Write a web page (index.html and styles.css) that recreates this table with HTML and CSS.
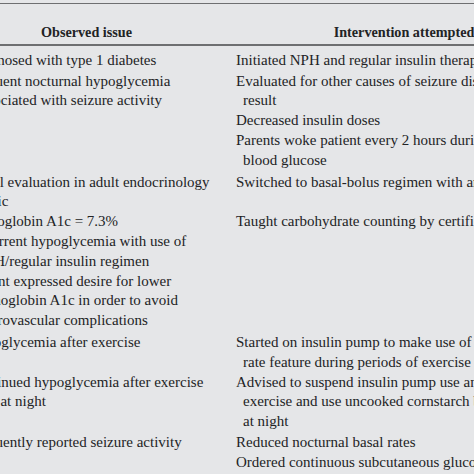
FILE: index.html
```html
<!DOCTYPE html>
<html>
<head>
<meta charset="utf-8">
<link rel="stylesheet" href="styles.css">
</head>
<body>
<div class="page">
<table class="tbl">
  <colgroup>
    <col class="k1">
    <col class="k2">
  </colgroup>
  <thead>
    <tr>
      <th>Observed issue</th>
      <th>Intervention attempted</th>
    </tr>
  </thead>
  <tbody>
    <tr class="r-a">
      <td class="c1"><div class="it">Diagnosed with type 1 diabetes</div></td>
      <td class="c2"><div class="it">Initiated NPH and regular insulin therapy</div></td>
    </tr>
    <tr class="r-b">
      <td class="c1"><div class="it">Frequent nocturnal hypoglycemia<br>associated with seizure activity</div></td>
      <td class="c2">
        <div class="it">Evaluated for other causes of seizure disorder; negative<br>result</div>
        <div class="it">Decreased insulin doses</div>
        <div class="it">Parents woke patient every 2 hours during the night to check<br>blood glucose</div>
      </td>
    </tr>
    <tr class="r-c">
      <td class="c1"><div class="it">Initial evaluation in adult endocrinology<br>clinic</div></td>
      <td class="c2"><div class="it">Switched to basal-bolus regimen with analog insulins</div></td>
    </tr>
    <tr class="r-d">
      <td class="c1">
        <div class="it">Hemoglobin A1c = 7.3%</div>
        <div class="it">Recurrent hypoglycemia with use of<br>NPH/regular insulin regimen</div>
        <div class="it">Patient expressed desire for lower<br>hemoglobin A1c in order to avoid<br>microvascular complications</div>
      </td>
      <td class="c2"><div class="it">Taught carbohydrate counting by certified diabetes educator</div></td>
    </tr>
    <tr class="r-e">
      <td class="c1"><div class="it">Hypoglycemia after exercise</div></td>
      <td class="c2"><div class="it">Started on insulin pump to make use of temporary basal<br>rate feature during periods of exercise</div></td>
    </tr>
    <tr class="r-f">
      <td class="c1"><div class="it">Continued hypoglycemia after exercise<br>and at night</div></td>
      <td class="c2"><div class="it">Advised to suspend insulin pump use and eat snacks during<br>exercise and use uncooked cornstarch before bedtime<br>at night</div></td>
    </tr>
    <tr class="r-g">
      <td class="c1"><div class="it">Frequently reported seizure activity</div></td>
      <td class="c2">
        <div class="it">Reduced nocturnal basal rates</div>
        <div class="it">Ordered continuous subcutaneous glucose monitoring</div>
      </td>
    </tr>
  </tbody>
</table>
</div>
</body>
</html>
```

FILE: styles.css
```css
html, body {
  margin: 0;
  padding: 0;
  background: #e5e6e8;
}
.page {
  width: 474px;
  height: 474px;
  overflow: hidden;
  background: #e5e6e8;
  padding-top: 3px;
  box-sizing: border-box;
}
.tbl {
  border-collapse: collapse;
  table-layout: fixed;
  width: 635px;
  margin-left: -55px;
  font-family: "Liberation Serif", "Times New Roman", serif;
  font-size: 15px;
  line-height: 19.8px;
  color: #222325;
  white-space: nowrap;
}
.k1 { width: 283px; }
.k2 { width: 352px; }
.tbl th {
  font-weight: bold;
  font-size: 14.2px;
  text-align: center;
  border-top: 1px solid #6e6f71;
  border-bottom: 2px solid #6e6f71;
  padding: 19px 0 1px 0;
  vertical-align: bottom;
}
.tbl td {
  vertical-align: top;
  text-align: left;
  padding: 1px 0 0 0;
}
.tbl td.c1 { padding-left: 23px; }
.tbl td.c2 { padding-left: 8px; }
.it {
  padding-left: 7px;
  text-indent: -7px;
}
.r-a td { padding-top: 5px; }
.r-b td { padding-top: 1px; }
.r-c td { padding-top: 2px; }
.r-d td { padding-top: 0; }
.r-e td { padding-top: 2px; }
.r-f td { padding-top: 0; }
.r-g td { padding-top: 1px; }
```
